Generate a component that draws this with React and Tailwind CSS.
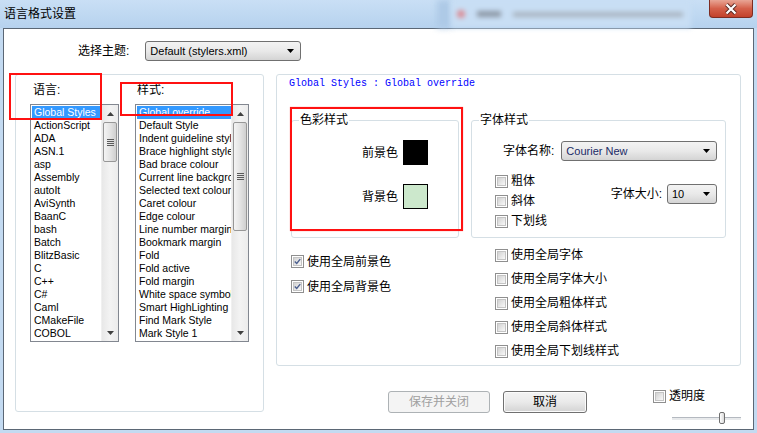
import React from 'react';

const languages = [
  'Global Styles', 'ActionScript', 'ADA', 'ASN.1', 'asp', 'Assembly', 'autoIt', 'AviSynth', 'BaanC',
  'bash', 'Batch', 'BlitzBasic', 'C', 'C++', 'C#', 'Caml', 'CMakeFile', 'COBOL',
];

const styleNames = [
  'Global override', 'Default Style', 'Indent guideline style', 'Brace highlight style', 'Bad brace colour',
  'Current line background colour', 'Selected text colour', 'Caret colour', 'Edge colour', 'Line number margin',
  'Bookmark margin', 'Fold', 'Fold active', 'Fold margin', 'White space symbol', 'Smart HighLighting',
  'Find Mark Style', 'Mark Style 1',
];

// win7 style checkbox
const Check = ({ checked }) => (
  <span className="flex h-[13px] w-[13px] shrink-0 border border-[#8f8f8f] bg-white p-[1px]">
    <span className="flex h-full w-full items-center justify-center border border-[#c4c4c4] bg-linear-to-br from-[#d2d2d2] to-[#f8f8f8]">
      {checked && (
        <svg width="9" height="9" viewBox="0 0 9 9" className="-mt-[1px]">
          <path d="M1 4.5 L3.5 7 L8 1.5" fill="none" stroke="#4a5e8e" strokeWidth="1.8" />
        </svg>
      )}
    </span>
  </span>
);

const CheckRow = ({ label, checked, className }) => (
  <div className={`flex items-center gap-[3px] text-[12px] ${className}`}>
    <Check checked={checked} />
    <span>{label}</span>
  </div>
);

const Combo = ({ value, className, textClass }) => (
  <div className={`flex h-[20px] items-center rounded-[3px] border border-[#707070] bg-linear-to-b from-[#f3f3f3] via-[#e9e9e9] to-[#d4d4d4] pl-[4px] pr-[6px] text-[11px] ${className}`}>
    <span className={`flex-1 truncate ${textClass}`}>{value}</span>
    <svg width="7" height="4" viewBox="0 0 7 4">
      <path d="M0 0 H7 L3.5 4 Z" fill="#000" />
    </svg>
  </div>
);

const Arrow = ({ up }) => (
  <div className="flex h-[17px] items-center justify-center">
    <svg width="7" height="4" viewBox="0 0 7 4">
      <path d={up ? 'M0 4 H7 L3.5 0 Z' : 'M0 0 H7 L3.5 4 Z'} fill="#404040" />
    </svg>
  </div>
);

const ListBox = ({ items, className, thumbClass }) => (
  <div className={`flex h-[238px] border border-[#828790] bg-white ${className}`}>
    <div className="min-w-0 flex-1 overflow-hidden pt-[1px] text-[10.5px]">
      {items.map((item, i) => (
        <div
          key={item}
          className={`ml-[1px] h-[13px] overflow-hidden whitespace-nowrap pl-[2px] leading-[13px] ${i === 0 ? 'bg-[#3399ff] text-white' : 'text-black'}`}
        >
          {item}
        </div>
      ))}
    </div>
    <div className="flex w-[17px] flex-col border-l border-[#f0f0f0] bg-linear-to-r from-[#e8e8e8] via-[#f3f3f3] to-[#ececec]">
      <Arrow up />
      <div className={`mx-[1px] flex items-center justify-center rounded-[2px] border border-[#979797] bg-linear-to-r from-[#f4f4f4] via-[#e4e4e4] to-[#cfcfcf] ${thumbClass}`}>
        <svg width="7" height="7" viewBox="0 0 7 7">
          <path d="M0 0.5 H7 M0 2.5 H7 M0 4.5 H7 M0 6.5 H7" stroke="#5a5a5a" strokeWidth="1" />
        </svg>
      </div>
      <div className="flex-1" />
      <Arrow />
    </div>
  </div>
);

const GroupBox = ({ title, className, children }) => (
  <div className={`relative rounded-[3px] border border-[#d5dfe5] ${className}`}>
    <span className="absolute -top-[8px] left-[7px] bg-white px-[1px] text-[12px] leading-[14px]">{title}</span>
    {children}
  </div>
);

const App = () => {
  return (
    <div className="relative h-[433px] w-[757px] overflow-hidden bg-[#c3daf1] font-['Liberation_Sans','Noto_Sans_CJK_SC',sans-serif] text-black">
      {/* title bar */}
      <div className="flex h-[28px] items-center bg-linear-to-b from-[#c9dff5] to-[#b6d2ee]">
        <div className="w-[437px] pl-[4px] text-[12px]">语言格式设置</div>
        <div className="h-full w-[14px] bg-[#adc9e6] blur-[3px]" />
        <div className="flex h-full w-[240px] items-center gap-[12px] bg-[#c8def4] pl-[6px] blur-[2.5px]">
          <div className="h-[8px] w-[8px] rounded-full bg-[#dc8a92]" />
          <div className="h-[6px] w-[24px] bg-[#8d98a6]" />
          <div className="h-[5px] w-[170px] bg-[#a9b4c0]" />
        </div>
        <div className="flex-1" />
        <div className="mr-[4px] flex h-[18px] w-[44px] items-center justify-center self-start rounded-b-[4px] border border-t-0 border-[#7d2c22] bg-linear-to-b from-[#e8a595] via-[#d4604a] to-[#c2412b]">
          <svg width="14" height="12" viewBox="0 0 14 12">
            <path d="M2.5 1.5 L11.5 10.5 M11.5 1.5 L2.5 10.5" stroke="#5a2a24" strokeWidth="4" />
            <path d="M2.5 1.5 L11.5 10.5 M11.5 1.5 L2.5 10.5" stroke="#ffffff" strokeWidth="2.2" />
          </svg>
        </div>
      </div>

      {/* window body */}
      <div className="mx-[3px] h-[402px] border border-[#5b6775] bg-white">
        <div className="mt-[12px] flex h-[20px] items-center pl-[74px]">
          <span className="mr-[16px] text-[12px]">选择主题:</span>
          <Combo value="Default (stylers.xml)" className="w-[156px]" />
        </div>

        <div className="mt-[13px] flex gap-[12px] pl-[11px]">
          {/* left group */}
          <div className="flex h-[338px] w-[249px] gap-[16px] rounded-[3px] border border-[#d5dfe5] pl-[14px]">
            <div className="flex flex-col">
              <div className="flex h-[29px] items-center pl-[3px] text-[12px]">语言:</div>
              <ListBox items={languages} className="w-[89px]" thumbClass="h-[40px]" />
            </div>
            <div className="flex flex-col">
              <div className="flex h-[29px] items-center pl-[2px] text-[12px]">样式:</div>
              <ListBox items={styleNames} className="w-[114px]" thumbClass="h-[109px]" />
            </div>
          </div>

          {/* right column */}
          <div className="flex w-[465px] flex-col">
            <div className="h-[292px] rounded-[3px] border border-[#d5dfe5]">
              <div className="pl-[12px] pt-[2px] font-['Liberation_Mono',monospace] text-[10px] leading-[14px] text-[#0000ff]">
                Global Styles : Global override
              </div>

              <div className="mt-[29px] flex gap-[12px] pl-[14px]">
                <GroupBox title="色彩样式" className="h-[118px] w-[168px]">
                  <div className="pl-[70px] pt-[19px] text-[12px]">
                    <div className="flex items-center gap-[5px]">
                      <span>前景色</span>
                      <div className="h-[25px] w-[25px] border border-black bg-black" />
                    </div>
                    <div className="mt-[19px] flex items-center gap-[5px]">
                      <span>背景色</span>
                      <div className="h-[25px] w-[25px] border border-black bg-[#cce8cc]" />
                    </div>
                  </div>
                </GroupBox>

                <GroupBox title="字体样式" className="h-[118px] w-[255px]">
                  <div className="mt-[20px] flex items-center pl-[31px]">
                    <span className="text-[12px]">字体名称:</span>
                    <Combo value="Courier New" className="ml-[7px] w-[156px]" textClass="text-[#1b2a66]" />
                  </div>
                  <div className="mt-[10px] flex">
                    <div className="flex flex-col pl-[23px]">
                      <CheckRow label="粗体" className="h-[20px]" />
                      <CheckRow label="斜体" className="h-[20px]" />
                      <CheckRow label="下划线" className="h-[20px]" />
                    </div>
                    <div className="ml-auto mr-[8px] mt-[13px] flex items-center self-start">
                      <span className="text-[12px]">字体大小:</span>
                      <Combo value="10" className="ml-[5px] w-[50px]" />
                    </div>
                  </div>
                </GroupBox>
              </div>

              <div className="flex pl-[14px]">
                <div className="mt-[11px] flex w-[204px] flex-col">
                  <CheckRow label="使用全局前景色" checked className="h-[25px]" />
                  <CheckRow label="使用全局背景色" checked className="h-[25px]" />
                </div>
                <div className="mt-[5px] flex flex-col">
                  <CheckRow label="使用全局字体" className="h-[24px]" />
                  <CheckRow label="使用全局字体大小" className="h-[24px]" />
                  <CheckRow label="使用全局粗体样式" className="h-[24px]" />
                  <CheckRow label="使用全局斜体样式" className="h-[24px]" />
                  <CheckRow label="使用全局下划线样式" className="h-[24px]" />
                </div>
              </div>
            </div>

            <div className="mt-[25px] flex items-start pl-[112px]">
              <div className="flex h-[22px] w-[102px] items-center justify-center rounded-[3px] border border-[#adb2b5] bg-[#f4f4f4] text-[12px] text-[#a0a0a0]">
                保存并关闭
              </div>
              <div className="ml-[13px] flex h-[22px] w-[84px] items-center justify-center rounded-[3px] border border-[#707070] bg-linear-to-b from-[#f3f3f3] via-[#eaeaea] to-[#d3d3d3] text-[12px] shadow-[inset_0_0_0_1px_#fbfbfb]">
                取消
              </div>
              <div className="-mt-[2px] ml-auto flex w-[88px] flex-col">
                <CheckRow label="透明度" className="h-[14px]" />
                <div className="ml-[19px] mt-[9px] flex h-[12px] w-[69px] items-center">
                  <div className="h-[3px] w-[47px] border-t border-[#b4b9c0] bg-[#e8eaec]" />
                  <div className="h-[12px] w-[6px] rounded-[2px] border border-[#6f6f6f] bg-linear-to-r from-white to-[#d9d9d9]" />
                  <div className="h-[3px] flex-1 border-t border-[#b4b9c0] bg-[#e8eaec]" />
                </div>
              </div>
            </div>
          </div>
        </div>
      </div>

      {/* red annotation boxes */}
      <div className="absolute left-[9px] top-[73px] h-[47px] w-[93px] border-2 border-[#ff1111]" />
      <div className="absolute left-[120px] top-[82px] h-[34px] w-[113px] border-2 border-[#ff1111]" />
      <div className="absolute left-[290px] top-[107px] h-[124px] w-[173px] border-2 border-[#ff1111] shadow-[0_0_1px_#ff8080]" />
    </div>
  );
};

export default App;
